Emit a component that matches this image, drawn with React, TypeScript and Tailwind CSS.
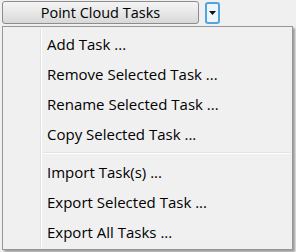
export default function App() {
  const group1 = ['Add Task ...', 'Remove Selected Task ...', 'Rename Selected Task ...', 'Copy Selected Task ...'];
  const group2 = ['Import Task(s) ...', 'Export Selected Task ...', 'Export All Tasks ...'];

  return (
    <div className="w-[296px] h-[252px] bg-[#f0f0f0] relative overflow-hidden" style={{ fontFamily: '"Open Sans", "Noto Sans", sans-serif' }}>
      {/* toolbar */}
      <div className="flex items-start gap-[6px] pl-[2px] pt-[1px]">
        <button className="w-[197px] h-[23px] rounded-[3px] border border-[#8c8c8c] bg-gradient-to-b from-[#f4f4f4] via-[#e8e8e8] to-[#d8d8d8] text-[14.5px] leading-[20px] text-black">
          Point Cloud Tasks
        </button>
        <button className="w-[15px] h-[22px] mt-[1px] rounded-[3px] border-2 border-[#4fa6dc] bg-[#eef6fb] flex items-center justify-center">
          <svg width="7" height="4" viewBox="0 0 7 4">
            <path d="M0 0h7L3.5 4z" fill="#111" />
          </svg>
        </button>
      </div>

      {/* menu */}
      <div className="absolute left-[2px] top-[26px] w-[291px] h-[224px] border border-[#979797] bg-[#f0f0f0] shadow-[2px_2px_2px_rgba(0,0,0,0.35)]">
        <div className="absolute left-[37px] top-[2px] bottom-[2px] w-[2px] border-l border-[#e2e2e2] bg-white" />
        <div className="flex flex-col pt-[2px] pl-[44px] text-[15px] text-black">
          {group1.map((t) => (
            <div key={t} className="h-[30px] leading-[30px]">{t}</div>
          ))}
          <div className="h-[8px] flex items-center -ml-[4px] mr-[2px]">
            <div className="w-full h-[2px] border-t border-[#e2e2e2] bg-white" />
          </div>
          {group2.map((t) => (
            <div key={t} className="h-[30px] leading-[30px]">{t}</div>
          ))}
        </div>
      </div>
    </div>
  );
}
